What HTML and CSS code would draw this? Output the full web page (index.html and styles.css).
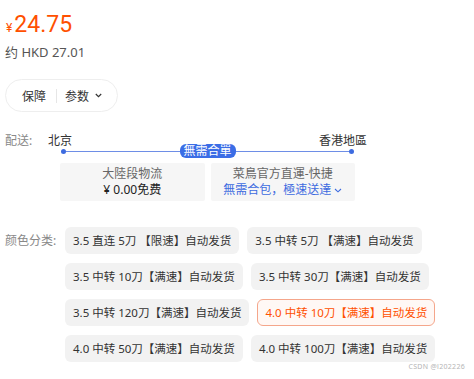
FILE: index.html
```html
<!DOCTYPE html>
<html lang="zh">
<head>
<meta charset="utf-8">
<link rel="stylesheet" href="styles.css">
</head>
<body>
<div class="page">
  <div class="price"><span class="yen">¥</span><span class="amount">24.75</span></div>
  <div class="hkd">约 HKD 27.01</div>
  <div class="tabs">
    <span class="tab">保障</span>
    <span class="sep"></span>
    <span class="tab">参数</span>
    <svg class="chev" width="7" height="5" viewBox="0 0 7 5"><path d="M0.8 1 L3.5 3.6 L6.2 1" fill="none" stroke="#333" stroke-width="1.2"/></svg>
  </div>

  <div class="delivery">
    <div class="label label-d">配送:</div>
    <div class="route">
      <div class="cities"><span>北京</span><span>香港地區</span></div>
      <div class="track">
        <span class="dot"></span><span class="seg"></span><span class="badge">無需合單</span><span class="seg"></span><span class="dot"></span>
      </div>
      <div class="cards">
        <div class="card">
          <div>大陸段物流</div>
          <div class="dark">¥ 0.00免费</div>
        </div>
        <div class="card">
          <div>菜鳥官方直運-快捷</div>
          <div class="blue">無需合包，極速送達<svg class="chev-b" width="8" height="5" viewBox="0 0 8 5"><path d="M1 1 L4 3.8 L7 1" fill="none" stroke="#3d6be0" stroke-width="1.1"/></svg></div>
        </div>
      </div>
    </div>
  </div>

  <div class="options">
    <div class="label label-o">颜色分类:</div>
    <div class="chips">
      <span class="chip">3.5 直连 5刀 【限速】自动发货</span>
      <span class="chip">3.5 中转 5刀 【满速】自动发货</span>
      <span class="chip">3.5 中转 10刀【满速】自动发货</span>
      <span class="chip">3.5 中转 30刀【满速】自动发货</span>
      <span class="chip">3.5 中转 120刀【满速】自动发货</span>
      <span class="chip selected">4.0 中转 10刀【满速】自动发货</span>
      <span class="chip">4.0 中转 50刀【满速】自动发货</span>
      <span class="chip">4.0 中转 100刀【满速】自动发货</span>
    </div>
  </div>
  <div class="watermark">CSDN @l202226</div>
</div>
</body>
</html>
```

FILE: styles.css
```css
* { box-sizing: border-box; }
html, body { margin: 0; padding: 0; background: #fff; }
body {
  font-family: "Noto Sans", "Noto Sans CJK SC", sans-serif;
  color: #333;
  width: 474px;
  height: 379px;
  overflow: hidden;
}
.page {
  position: relative;
  padding: 11px 0 0 5px;
  height: 379px;
}
.price {
  display: flex;
  align-items: baseline;
  color: #ff5000;
  line-height: 28px;
  padding-left: 1px;
}
.yen { font-size: 12px; font-family: "Roboto", "Noto Sans CJK SC", sans-serif; }
.amount { font-size: 23px; font-family: "Roboto", sans-serif; margin-left: 2px; }
.hkd {
  margin-top: 1px;
  font-size: 13px;
  line-height: 18px;
  color: #555;
}
.tabs {
  margin-top: 18px;
  width: 113px;
  height: 33px;
  border: 1px solid #eeeeee;
  border-radius: 17px;
  display: flex;
  align-items: center;
  padding-left: 16px;
  font-size: 12px;
  color: #333;
}
.sep { width: 1px; height: 14px; background: #e6e6e6; margin: 0 8px 0 10px; }
.chev { margin-left: 6px; }

.delivery {
  margin-top: 22px;
  display: flex;
}
.label { color: #888; font-size: 12px; }
.label-d { width: 43px; line-height: 14px; }
.route { width: 319px; }
.cities {
  display: flex;
  justify-content: space-between;
  font-size: 12px;
  line-height: 14px;
  color: #333;
}
.track {
  display: flex;
  align-items: center;
  margin: -4px 13px 0 13px;
  height: 14px;
}
.dot { width: 5px; height: 5px; border-radius: 50%; background: #3d6be0; flex: none; }
.seg { flex: 1; height: 1px; background: #6e8ee6; }
.badge {
  background: #3b6de6;
  color: #fff;
  font-size: 12px;
  line-height: 14px;
  height: 14px;
  padding: 0 4px;
  border-radius: 6px;
}
.cards {
  display: flex;
  gap: 6px;
  margin: 5px 12px 0 12px;
}
.card {
  flex: 1;
  background: #f6f6f6;
  border-radius: 2px;
  padding: 3px 0 3px;
  text-align: center;
  font-size: 12px;
  line-height: 16px;
  color: #666;
}
.card .dark { color: #222; }
.card .blue { color: #3d6be0; }
.chev-b { margin-left: 3px; vertical-align: 1px; }

.options {
  margin-top: 26px;
  display: flex;
  align-items: flex-start;
}
.label-o { width: 60px; line-height: 27px; flex: none; }
.chips {
  display: flex;
  flex-wrap: wrap;
  gap: 9px 8px;
  width: 400px;
}
.chip {
  height: 27px;
  line-height: 27px;
  padding: 0 8px;
  background: #f2f2f2;
  border-radius: 6px;
  font-size: 11.5px;
  color: #333;
  white-space: nowrap;
}
.chip.selected {
  background: #fff8f5;
  border: 1px solid #f5a68b;
  line-height: 25px;
  padding: 0 7px;
  color: #ff5000;
}
.watermark {
  position: absolute;
  right: 9px;
  bottom: 8px;
  font-size: 7px;
  color: #b5b5b5;
  letter-spacing: 0.3px;
}
```
